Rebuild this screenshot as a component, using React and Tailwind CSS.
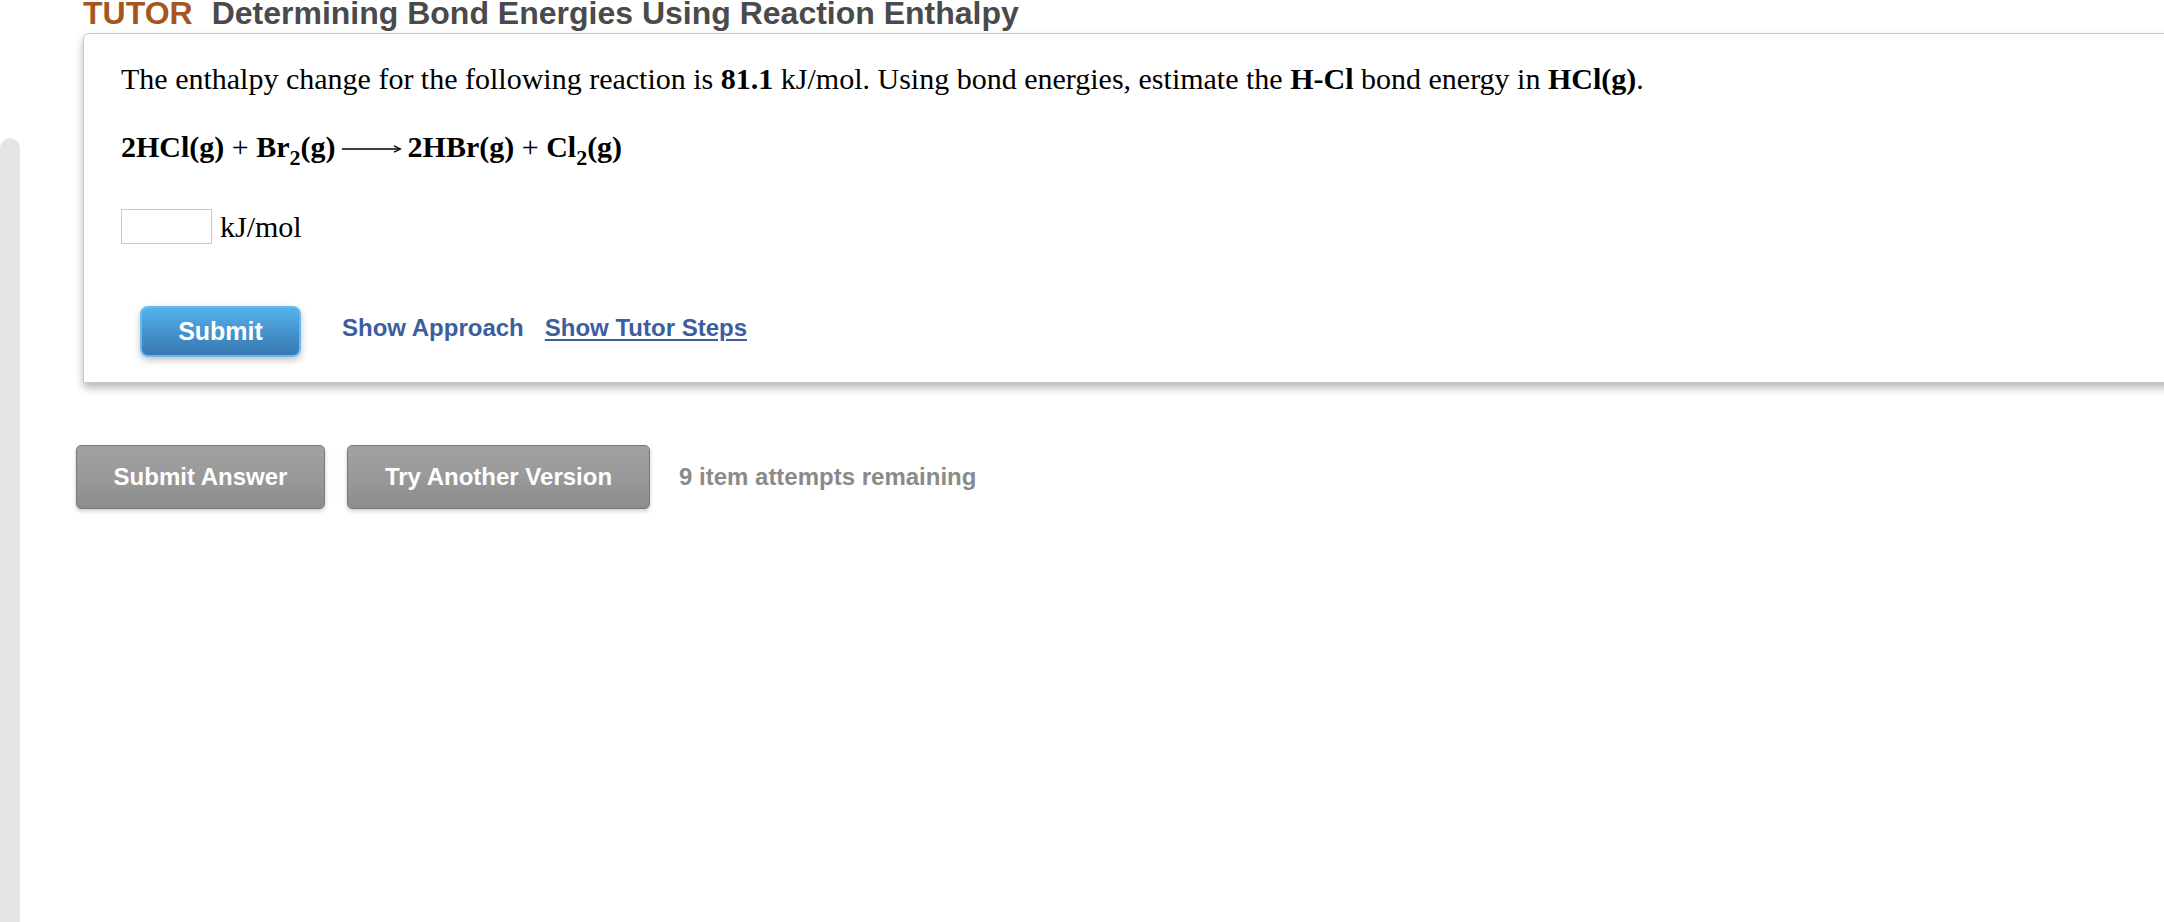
export default function App() {
  const sans = "font-['Liberation_Sans',Arial,Helvetica,sans-serif]";
  const serif = "font-['Liberation_Serif','Times_New_Roman',Times,serif]";

  return (
    <div className="flex w-[2164px] h-[922px] overflow-hidden bg-white">
      {/* left rail */}
      <div className="w-[20px] shrink-0 pt-[138px]">
        <div className="h-full rounded-t-[10px] bg-[#e5e5e5]" />
      </div>

      {/* main column */}
      <div className="flex-1 min-w-0 pl-[56px]">
        {/* Title */}
        <div className={`${sans} ml-[7px] h-[26px] leading-[26px] text-[32px] font-bold whitespace-nowrap`}>
          <span className="text-[#a5561f]">TUTOR</span>
          <span className="ml-[19px] text-[#4a4a4a]">Determining Bond Energies Using Reaction Enthalpy</span>
        </div>

        {/* Card */}
        <div className="ml-[7px] mt-[7px] -mr-[20px] h-[350px] rounded-tl-[6px] border border-[#c8c8c8] bg-white pl-[37px] pt-[28px] shadow-[0_5px_8px_rgba(0,0,0,0.28)]">
          <p className={`${serif} text-[30px] leading-[34px] text-black whitespace-nowrap`}>
            The enthalpy change for the following reaction is <b>81.1</b> kJ/mol. Using bond energies,
            estimate the <b>H-Cl</b> bond energy in <b>HCl(g)</b>.
          </p>

          <p className={`${serif} mt-[34px] text-[30px] leading-[34px] text-black whitespace-nowrap`}>
            <b>2HCl(g)</b> + <b>Br<sub className="text-[22px] -bottom-2">2</sub>(g)</b>
            <svg width="60" height="8" viewBox="0 0 60 8" className="inline-block mx-[6px] align-[4px]">
              <path d="M0 4 H58" stroke="#000" strokeWidth="1.3" fill="none" />
              <path d="M52 0.8 L58.5 4 L52 7.2" stroke="#000" strokeWidth="1.3" fill="none" />
            </svg>
            <b>2HBr(g)</b> + <b>Cl<sub className="text-[22px] -bottom-2">2</sub>(g)</b>
          </p>

          <div className="mt-[45px] flex items-center gap-[8px]">
            <input
              type="text"
              className="h-[35px] w-[91px] border border-[#c8c8c8] bg-white outline-none"
            />
            <span className={`${serif} text-[30px] leading-[35px] text-black`}>kJ/mol</span>
          </div>

          <div className="mt-[62px] ml-[19px] flex items-center">
            <button
              className={`${sans} h-[51px] w-[161px] rounded-[8px] border-2 border-[#6ab9ee] bg-gradient-to-b from-[#55b2ec] to-[#3877b1] text-[25px] font-bold text-white shadow-[0_3px_7px_rgba(0,0,0,0.25)]`}
            >
              Submit
            </button>
            <a className={`${sans} ml-[41px] mb-[8px] text-[24px] font-bold text-[#3b5e9f]`}>Show Approach</a>
            <a className={`${sans} ml-[21px] mb-[8px] text-[24px] font-bold text-[#3b5e9f] underline underline-offset-[3px]`}>
              Show Tutor Steps
            </a>
          </div>
        </div>

        {/* bottom actions */}
        <div className={`${sans} mt-[62px] flex items-center`}>
          <button className="h-[64px] w-[249px] rounded-[5px] border border-[#7a7a7a] bg-gradient-to-b from-[#a2a2a2] via-[#999999] to-[#8c8c8c] text-[24px] font-bold text-white shadow-[0_2px_4px_rgba(0,0,0,0.2)]">
            Submit Answer
          </button>
          <button className="ml-[22px] h-[64px] w-[303px] rounded-[5px] border border-[#7a7a7a] bg-gradient-to-b from-[#a2a2a2] via-[#999999] to-[#8c8c8c] text-[24px] font-bold text-white shadow-[0_2px_4px_rgba(0,0,0,0.2)]">
            Try Another Version
          </button>
          <span className="ml-[29px] text-[24px] font-bold text-[#8a8a8a]">9 item attempts remaining</span>
        </div>
      </div>
    </div>
  );
}
